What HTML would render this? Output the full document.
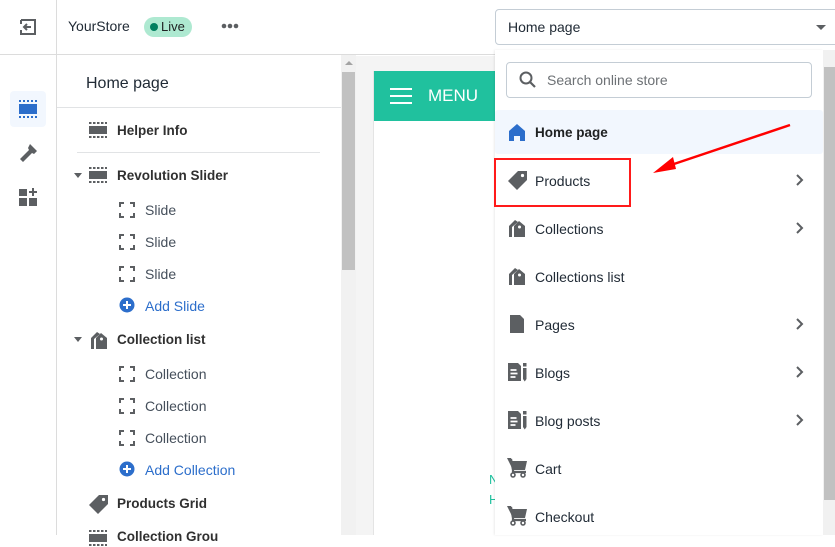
<!DOCTYPE html>
<html><head><style>
*{margin:0;padding:0;box-sizing:border-box}
body{width:835px;height:535px;overflow:hidden;background:#fff;font-family:"Liberation Sans",sans-serif;color:#212b36;position:relative;font-size:14px}
.a{position:absolute}
.t{font-size:14px;color:#212b36}
.b{font-weight:bold;color:#303030;font-size:13.5px}
.sm{color:#454f5b}
</style></head><body>
<div class="a" style="left:0;top:0;width:835px;height:55px;border-bottom:1px solid #dcdcdc;background:#fff"></div>
<div class="a" style="left:56px;top:0;width:1px;height:535px;background:#dcdcdc"></div>
<svg class="a" style="left:19px;top:18px" width="18" height="18" viewBox="0 0 18 18"><path d="M2 2h14v14H2v-4M2 6V2" fill="none" stroke="#5c5f62" stroke-width="2"/><path d="M12 9H5M8 6L5 9l3 3" fill="none" stroke="#5c5f62" stroke-width="2"/></svg>
<div class="a t" style="left:68px;top:18px;font-size:14px">YourStore</div>
<div class="a" style="left:144px;top:17px;width:48px;height:20px;border-radius:10px;background:#aee9d1"></div>
<div class="a" style="left:150px;top:23px;width:8px;height:8px;border-radius:50%;background:#007f5f"></div>
<div class="a" style="left:161px;top:19px;font-size:13px;color:#202223">Live</div>
<svg class="a" style="left:221px;top:22px" width="18" height="8"><circle cx="3" cy="4" r="2.3" fill="#5c5f62"/><circle cx="9" cy="4" r="2.3" fill="#5c5f62"/><circle cx="15" cy="4" r="2.3" fill="#5c5f62"/></svg>
<div class="a" style="left:10px;top:91px;width:36px;height:36px;border-radius:4px;background:#f2f7fe"></div>
<svg class="a" style="left:18px;top:99px" width="20" height="20" viewBox="0 0 20 20"><rect x="1" y="5" width="18" height="10" fill="#2c6ecb"/><path d="M1 2h18M1 18h18" stroke="#2c6ecb" stroke-width="2" stroke-dasharray="2 2"/></svg>
<svg class="a" style="left:18px;top:143px" width="20" height="20" viewBox="0 0 20 20"><path d="M12 1l7 7-3 3-2-1-6 6-3 3-3-3 3-3 6-6-1-2z" fill="#5c5f62"/></svg>
<svg class="a" style="left:18px;top:187px" width="20" height="20" viewBox="0 0 20 20"><rect x="1" y="2" width="8" height="7" fill="#5c5f62"/><rect x="1" y="11" width="8" height="8" fill="#5c5f62"/><rect x="11" y="11" width="8" height="8" fill="#5c5f62"/><path d="M15 1v8M11 5h8" stroke="#5c5f62" stroke-width="2"/></svg>
<div class="a" style="left:86px;top:75px;font-size:16px;color:#212b36">Home page</div>
<div class="a" style="left:57px;top:107px;width:284px;height:1px;background:#e1e3e5"></div>
<div class="a" style="left:77px;top:152px;width:243px;height:1px;background:#e1e3e5"></div>
<div class="a" style="left:341px;top:55px;width:15px;height:480px;background:#f1f1f1"></div>
<div class="a" style="left:342px;top:72px;width:13px;height:198px;background:#c1c1c1"></div>
<div class="a" style="left:345px;top:61px;width:0;height:0;border-left:4px solid transparent;border-right:4px solid transparent;border-bottom:4px solid #a3a3a3"></div>
<svg width="0" height="0" style="position:absolute"><defs>
<g id="sec"><rect x="0" y="4" width="18" height="8" fill="#5c5f62"/><path d="M0 1h18M0 15h18" stroke="#5c5f62" stroke-width="2" stroke-dasharray="2.5 1.5"/></g>
<g id="blk"><path d="M1 5V1h4M11 1h4v4M15 11v4h-4M5 15H1v-4" fill="none" stroke="#5c5f62" stroke-width="2"/></g>
<g id="tags"><path d="M12 3l6 5v11H7V8z" fill="#5c5f62"/><path d="M8 2L2 8v11h3V9l6-5z" fill="#5c5f62"/><circle cx="12.5" cy="9" r="1.5" fill="#fff"/></g>
<g id="tag"><path d="M10 1h9v9L9 20 0 11z" fill="#5c5f62"/><circle cx="14.5" cy="5.5" r="1.6" fill="#fff"/></g>
<g id="blog"><path d="M1 1h10l3 3v15H1z" fill="#5c5f62"/><path d="M3.5 8h6M3.5 11.5h7M3.5 15h5" stroke="#fff" stroke-width="1.8"/><rect x="16" y="1" width="3.5" height="3.5" fill="#5c5f62"/><path d="M16 6h3.5v11l-1.75 2.5L16 17z" fill="#5c5f62"/></g>
<g id="cart"><path d="M0 1h4l1 3h15l-2 9H6z" fill="#5c5f62"/><path d="M4 2l2 11v2h13" fill="none" stroke="#5c5f62" stroke-width="2.2"/><circle cx="6" cy="18" r="2" fill="none" stroke="#5c5f62" stroke-width="1.6"/><circle cx="16" cy="18" r="2" fill="none" stroke="#5c5f62" stroke-width="1.6"/></g>
<g id="chev"><path d="M1 1l5 5-5 5" fill="none" stroke="#5c5f62" stroke-width="2"/></g>
</defs></svg>
<svg class="a" style="left:89px;top:122px" width="18" height="17"><use href="#sec"/></svg>
<div class="a b" style="left:117px;top:123px">Helper Info</div>
<div class="a" style="left:74px;top:173px;border-left:4px solid transparent;border-right:4px solid transparent;border-top:5px solid #5c5f62"></div>
<svg class="a" style="left:89px;top:167px" width="18" height="17"><use href="#sec"/></svg>
<div class="a b" style="left:117px;top:168px">Revolution Slider</div>
<svg class="a" style="left:119px;top:202px" width="16" height="16"><use href="#blk"/></svg><div class="a sm" style="left:145px;top:202px">Slide</div>
<svg class="a" style="left:119px;top:234px" width="16" height="16"><use href="#blk"/></svg><div class="a sm" style="left:145px;top:234px">Slide</div>
<svg class="a" style="left:119px;top:266px" width="16" height="16"><use href="#blk"/></svg><div class="a sm" style="left:145px;top:266px">Slide</div>
<svg class="a" style="left:119px;top:297px" width="16" height="16" viewBox="0 0 16 16"><circle cx="8" cy="8" r="7.5" fill="#2c6ecb"/><path d="M8 4v8M4 8h8" stroke="#fff" stroke-width="2"/></svg><div class="a" style="left:145px;top:298px;color:#2c6ecb">Add Slide</div>
<div class="a" style="left:74px;top:337px;border-left:4px solid transparent;border-right:4px solid transparent;border-top:5px solid #5c5f62"></div>
<svg class="a" style="left:89px;top:330px" width="20" height="20"><use href="#tags"/></svg>
<div class="a b" style="left:117px;top:332px">Collection list</div>
<svg class="a" style="left:119px;top:366px" width="16" height="16"><use href="#blk"/></svg><div class="a sm" style="left:145px;top:366px">Collection</div>
<svg class="a" style="left:119px;top:398px" width="16" height="16"><use href="#blk"/></svg><div class="a sm" style="left:145px;top:398px">Collection</div>
<svg class="a" style="left:119px;top:430px" width="16" height="16"><use href="#blk"/></svg><div class="a sm" style="left:145px;top:430px">Collection</div>
<svg class="a" style="left:119px;top:461px" width="16" height="16" viewBox="0 0 16 16"><circle cx="8" cy="8" r="7.5" fill="#2c6ecb"/><path d="M8 4v8M4 8h8" stroke="#fff" stroke-width="2"/></svg><div class="a" style="left:145px;top:462px;color:#2c6ecb">Add Collection</div>
<svg class="a" style="left:89px;top:494px" width="20" height="20"><use href="#tag"/></svg>
<div class="a b" style="left:117px;top:496px">Products Grid</div>
<svg class="a" style="left:89px;top:530px" width="18" height="17"><use href="#sec"/></svg>
<div class="a b" style="left:117px;top:529px">Collection Grou</div>
<div class="a" style="left:356px;top:56px;width:479px;height:479px;background:#f4f4f4"></div>
<div class="a" style="left:373px;top:71px;width:130px;height:464px;background:#fff;border-left:1px solid #e4e4e4"></div>
<div class="a" style="left:374px;top:71px;width:125px;height:50px;background:#20c19e"></div>
<div class="a" style="left:390px;top:88px;width:22px;height:2px;background:#fff;box-shadow:0 7px 0 #fff,0 14px 0 #fff"></div>
<div class="a" style="left:428px;top:86px;font-size:17px;color:#fff">MENU</div>
<div class="a" style="left:489px;top:472px;font-size:13px;color:#20c19e">N</div>
<div class="a" style="left:489px;top:492px;font-size:13px;color:#20c19e">H</div>
<div class="a" style="left:495px;top:9px;width:345px;height:36px;border:1px solid #c4cdd5;border-radius:4px;background:#fff"></div>
<div class="a" style="left:508px;top:19px;font-size:14px;color:#212b36">Home page</div>
<div class="a" style="left:816px;top:25px;border-left:5px solid transparent;border-right:5px solid transparent;border-top:5px solid #5c5f62"></div>
<div class="a" style="left:495px;top:50px;width:328px;height:485px;background:#fff;box-shadow:-1px 0 2px rgba(0,0,0,.08)"></div>
<div class="a" style="left:823px;top:50px;width:12px;height:485px;background:#f1f1f1"></div>
<div class="a" style="left:824px;top:67px;width:11px;height:433px;background:#c1c1c1"></div>
<div class="a" style="left:506px;top:62px;width:306px;height:36px;border:1px solid #c4cdd5;border-radius:4px"></div>
<svg class="a" style="left:519px;top:71px" width="18" height="18" viewBox="0 0 18 18"><circle cx="7" cy="7" r="5.5" fill="none" stroke="#5c5f62" stroke-width="2"/><path d="M11 11l5 5" stroke="#5c5f62" stroke-width="2.2"/></svg>
<div class="a" style="left:547px;top:72px;color:#6d7175">Search online store</div>
<div class="a" style="left:495px;top:110px;width:328px;height:44px;background:#f2f7fe;border-radius:3px"></div>
<svg class="a" style="left:508px;top:123px" width="18" height="18" viewBox="0 0 18 18"><path d="M9 1l8 7v10h-5v-5H6v5H1V8z" fill="#2c6ecb"/></svg>
<div class="a" style="left:535px;top:125px;font-weight:bold;color:#202223;font-size:13.5px">Home page</div>
<svg class="a" style="left:508px;top:170px" width="20" height="20"><use href="#tag"/></svg><div class="a t" style="left:535px;top:173px">Products</div>
<svg class="a" style="left:796px;top:174px" width="8" height="12"><use href="#chev"/></svg>
<svg class="a" style="left:507px;top:218px" width="20" height="20"><use href="#tags"/></svg><div class="a t" style="left:535px;top:221px">Collections</div>
<svg class="a" style="left:796px;top:222px" width="8" height="12"><use href="#chev"/></svg>
<svg class="a" style="left:507px;top:266px" width="20" height="20"><use href="#tags"/></svg><div class="a t" style="left:535px;top:269px">Collections list</div>
<svg class="a" style="left:509px;top:314px" width="16" height="20" viewBox="0 0 16 20"><path d="M1 1h10l4 4v14H1z" fill="#5c5f62"/></svg><div class="a t" style="left:535px;top:317px">Pages</div>
<svg class="a" style="left:796px;top:318px" width="8" height="12"><use href="#chev"/></svg>
<svg class="a" style="left:507px;top:362px" width="20" height="20"><use href="#blog"/></svg><div class="a t" style="left:535px;top:365px">Blogs</div>
<svg class="a" style="left:796px;top:366px" width="8" height="12"><use href="#chev"/></svg>
<svg class="a" style="left:507px;top:410px" width="20" height="20"><use href="#blog"/></svg><div class="a t" style="left:535px;top:413px">Blog posts</div>
<svg class="a" style="left:796px;top:414px" width="8" height="12"><use href="#chev"/></svg>
<svg class="a" style="left:507px;top:457px" width="21" height="21"><use href="#cart"/></svg><div class="a t" style="left:535px;top:461px">Cart</div>
<svg class="a" style="left:507px;top:505px" width="21" height="21"><use href="#cart"/></svg><div class="a t" style="left:535px;top:509px">Checkout</div>
<div class="a" style="left:494px;top:158px;width:137px;height:49px;border:2px solid #ff1a1a"></div>
<svg class="a" style="left:640px;top:118px" width="160" height="60" viewBox="0 0 160 60"><path d="M150 7L25 49" stroke="#f00" stroke-width="2.5"/><path d="M13 55l20-16 3 12z" fill="#f00"/></svg>
</body></html>
